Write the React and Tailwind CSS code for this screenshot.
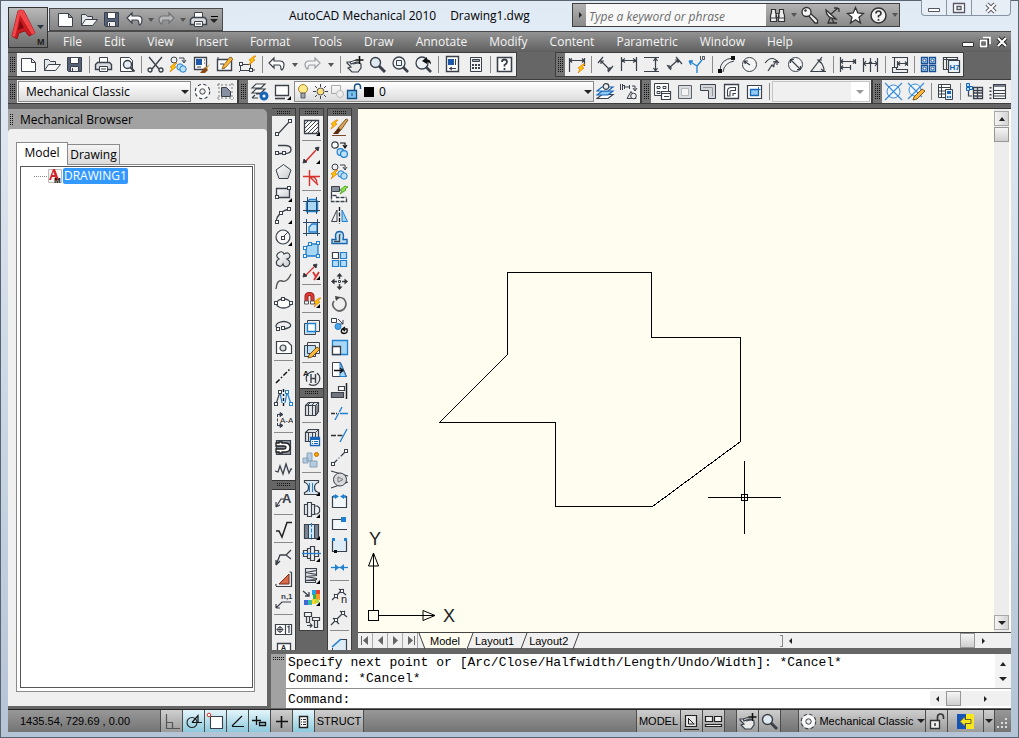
import React from 'react';

const K = '#3b414b';
const B = '#1f7fd0';
const L = '#bfe1f6';
const O = '#f5a800';
const R = '#d8322c';

function P({ d, f = 'none', s = K, w = 1, ...rest }) {
  return <path d={d} fill={f} stroke={s} strokeWidth={w} {...rest} />;
}

const corner = <path d="M18 14v4h-4z" fill="#000" />;
const bolt = (x, y) => <path d={`M${x + 5} ${y}l-5 4 2 1-2 4 6-5-2-1 3-3z`} fill="#ffc400" stroke="#e07b00" strokeWidth="0.7" />;
const dot = (x, y, c = K) => <rect x={x - 1.5} y={y - 1.5} width="3" height="3" fill="#fff" stroke={c} />;
const gearPath = (
  <>
    <circle cx="9.5" cy="9.5" r="6.5" fill="#fafafa" stroke={K} strokeWidth="2.6" strokeDasharray="2.9 2.2" />
    <circle cx="9.5" cy="9.5" r="6" fill="#fafafa" stroke="#fafafa" strokeWidth="1.4" />
    <circle cx="9.5" cy="9.5" r="2.7" fill="#eee" stroke={K} />
  </>
);

const ICONS = {
  new: <P d="M2.5 3.5h10l4 4v9h-14zM12.5 3.5v4h4" f="#fff" />,
  open: <><P d="M2.5 15.5v-11h4l2 2h5v3" f="#e4e7ea" /><P d="M2.5 15.5l4-6h12l-5 6z" f="#f6f6f6" /></>,
  save: <><P d="M2.5 2.5h14v14h-13l-1-1z" f="#56617a" /><P d="M5.5 2.5h8v6h-8z" f="#fff" /><P d="M5.5 11.5h8v5h-8zM7.5 13v3" f="#eee" /></>,
  print: <><P d="M5.5 2.5h8v5h-8z" f="#fff" /><P d="M3.5 7.5h12l2 2v5h-16v-5z" f="#d9dbde" w={1.4} /><P d="M5.5 11.5h8v5h-8zM7 14h5" f="#fff" /></>,
  preview: <><P d="M3.5 2.5h9l3 3v11h-12z" f="#fff" /><circle cx="10.5" cy="9.5" r="4" fill="#e6eef5" stroke={K} strokeWidth="1.4" /><P d="M13.5 12.5l4 4" w={2} /></>,
  cut: <><P d="M3 2l10 12M16 2L6 14" w={1.4} /><circle cx="4" cy="15" r="2" fill="none" stroke={K} strokeWidth="1.3" /><circle cx="15" cy="15" r="2" fill="none" stroke={K} strokeWidth="1.3" /></>,
  copyclip: <><circle cx="5" cy="5" r="3" fill="none" stroke={K} /><P d="M10 3h5v4M13 5l2 3 2-3" />{bolt(1, 8)}<circle cx="11" cy="12" r="3.2" fill={L} stroke={B} /><circle cx="14" cy="14" r="3.2" fill={L} stroke={B} /></>,
  matchprop: <><P d="M2.5 2.5h12v12h-12z" f="#fff" w={1.3} /><path d="M4 4h6v6H4z" fill="#1d58a8" /><P d="M12 5h1M12 8h1M5 12h4" /><path d="M18 9l-5 4 1 2z" fill="#d89b2c" /><path d="M13 12l3 3-3 3H8z" fill="#8b4a12" /></>,
  blockedit: <><P d="M2.5 4.5h14v11h-14z" f="#fff" w={1.4} /><P d="M5 9h4v5M3 2v3M16 2v3" /><path d="M8 11L15 2l3 2-7 8-4 2z" fill="#fdb73a" stroke="#7a4a00" strokeWidth="0.7" /></>,
  wipeout: <><P d="M2.5 9.5h10v6h-10zM13 15h4" /><P d="M3 15l-2 2M12 9l2-2" />{dot(3, 9)}{dot(13, 15)}{bolt(11, 1)}</>,
  undo: <P d="M7 3L2 8l5 5v-3h5q2 0 2 4 0 1 1 1 2-2 2-5 0-4-4-4H7z" f="#fff" w={1.2} />,
  redo: <P d="M12 3l5 5-5 5v-3H7q-2 0-2 4-2 0-3-4 0-4 4-4h6z" f="#f4f4f4" s="#9a9ea4" w={1.2} />,
  redodim: <P d="M12 3l5 5-5 5v-3H7q-2 0-2 4-2 0-3-4 0-4 4-4h6z" f="#b9b9b9" s="#6f7378" w={1.2} />,
  pan: <><P d="M2 7l3 0 1 2 6-2 4 2v4l-3 4H7L3 13l3-1-4-4z" f="#e9e9e9" w={1.2} /><P d="M5 7l6-2M8 9l5-1" /><P d="M14.5 1v8M10.5 5h8" s="#111" w={1.6} /></>,
  zoom: <><circle cx="7.500" cy="7.500" r="5" fill="#dfeaf0" stroke={K} strokeWidth="1.4" /><P d="M11 11l6 6" w={3} /></>,
  zoomwin: <><circle cx="8" cy="8" r="6" fill="#eef3f6" stroke={K} strokeWidth="1.3" /><P d="M5.500 5.500h5v5h-5z" /><P d="M12 12l5 5" w={2.600} /></>,
  zoomprev: <><circle cx="8" cy="8" r="6" fill="#eef3f6" stroke={K} strokeWidth="1.3" /><P d="M12 12l5 5" w={2.600} /><path d="M8 6l5-4v2.500q4 0 4 5-1-2.500-4-2.500V9z" fill="#111" /></>,
  props: <><P d="M3.500 1.500h12v15h-12z" f="#fff" w={1.400} /><path d="M5 4h6v6H5z" fill="#1d58a8" /><P d="M12.500 4v6M6 13.500h7M9 12l-2.500 1.500L9 15" /></>,
  calc: <><P d="M4.500 2.500h11v14h-11z" f="#f4f4f4" /><P d="M6.500 4.500h7v2h-7z" f="#9aa" /><path d="M6 9h2v2H6zM9 9h2v2H9zM12 9h2v2h-2zM6 12h2v2H6zM9 12h2v2H9zM12 12h2v2h-2z" fill={K} /></>,
  help: <><P d="M2.500 2.500h14v14h-14z" f="#fff" w={1.600} /><P d="M7 7q0-2.500 2.500-2.500T12 7q0 1.500-2.500 3v1.500M9.500 13v2" w={1.800} /></>,
  powerdim: <><P d="M2.500 3v14M17.500 3v8M3 5.500h14M5 3.500l-2 2 2 2M15 3.500l2 2-2 2" w={1.200} />{bolt(11, 9)}</>,
  aligned: <><P d="M5 6l9 9M2 8l5-6M12 17l5-6M5 9V6h3M14 12v3h-3" w={1.200} /></>,
  linear: <P d="M2.500 2v14M17.500 2v14M3 5.500h14M6 3.500l-3 2 3 2M14 3.500l3 2-3 2" w={1.200} />,
  vertical: <P d="M2 2.500h15M2 16.500h15M13.500 3v13M11.500 6l2-3 2 3M11.500 13l2 3 2-3" w={1.200} />,
  rotated: <P d="M4 13l9-8M2 10l4 5M11 2l6 7M4 10v3h3M10 5h3v3" w={1.200} />,
  leaderbl: <><P d="M1 6l8 5v7M9 11l5-6M1 6l2 4M1 6h4" s={B} w={1.300} /><P d="M12.500 1v4M14.500 1.500h2v3h-2z" w={0.900} /></>,
  arc: <><P d="M3 16Q3 4 16 3M6 17Q7 8 17 6" /><path d="M1 14h4v4H1zM14 1h4v4h-4z" fill="#111" /></>,
  radius: <><circle cx="9.500" cy="9.500" r="7" fill="#f5f5f5" stroke={K} /><P d="M4 6l6 4M4 6l1.500 3M4 6l4 0" w={1.200} /></>,
  jog: <P d="M2 8Q9-1 16 8M10 7l4-1v4M14 6q-4 3-3 6L9 10l-4 6" w={1.200} />,
  diameter: <><circle cx="9.500" cy="9.500" r="7" fill="#f5f5f5" stroke={K} /><P d="M4.500 4.500l10 10M4.500 8V4.500H8M14.500 11v3.500H11" w={1.200} /></>,
  angular: <P d="M17 16.500H2L13 2M9 5q6 4 6 11M12 8l-3-3 4 0M12 14l3 2.500" w={1.200} />,
  baseline: <P d="M2.500 2v15M3 6.500h14M17.500 4v5M3 12.500h9M12.500 10v5M5 4.500l-2 2 2 2M15 4.500l2 2-2 2M5 10.500l-2 2 2 2" w={1.200} />,
  continue: <P d="M2.500 3v14M9.500 3v14M16.500 3v14M3 8.500h13M5 6l-2 2.500L5 11M14 6l2 2.500-2 2.500M8 7l1.500 1.500L11 7" w={1.200} />,
  ordinate: <P d="M2.500 17.500v-5h4v2h11v3zM2 2.500h16M4.500 3v9M7.500 6v7M17.500 3v8M8 8.500h9M10 6.500l-2 2 2 2M15 6.500l2 2-2 2" w={1.100} />,
  fourcirc: <><P d="M2.500 2.500h6v6h-6zM10.500 2.500h6v6h-6zM2.500 10.500h6v6h-6zM10.500 10.500h6v6h-6z" f={L} s="#1a4f93" w={1.300} />{[5.5, 13.5].map(x => [5.5, 13.5].map(y => <circle key={`${x}-${y}`} cx={x} cy={y} r="1.500" fill="#fff" stroke="#1a4f93" />))}</>,
  h7: <><P d="M1.500 2.500h14v12h-14zM2 4.500h13M4.500 3v11" f="#fff" w={1.200} /><P d="M6.500 5.500h11v12h-11z" f="#eaf4fb" w={1.200} /><text x="7.500" y="15" fontSize="8" fontWeight="bold" fill="#1560b0" fontFamily="Liberation Sans, sans-serif">H7</text></>,
  gear: gearPath,
  wssave: <><P d="M3 1v17M16 1v17M1 3h17M1 16h17" s="#777" strokeDasharray="2 2" /><P d="M5.500 14.500v-9h5l4 4v5z" f="#8690a2" /></>,
  layers: <><P d="M6 2h9l-4 4H2zM6 7h9l-4 4H2zM6 12h6M2 16l3-3M2 16h6" f="#fff" w={1.200} /><circle cx="14" cy="14" r="3" fill="#fff" stroke="#1765b8" strokeWidth="3" /></>,
  layerbox: <><P d="M2.500 3.500h13v10h-13z" f="#fff" w={1.300} /><P d="M2 16.500h10" w={1.600} />{corner}</>,
  layerprev: <><P d="M6 12.500h11l-5 4H1z" f="#fff" s={K} w={1.200} /><P d="M6 9h11l-5 4H1z" f="#8fcbf4" s="#1765b8" w={1.200} /><P d="M6 5h11l-5 4H1z" f="#fff" s="#1765b8" w={1.200} /><circle cx="10" cy="4.500" r="2.800" fill="#eee" stroke={K} strokeWidth="1.200" /></>,
  layerstate: <><P d="M1.500 2v6M3.500 2v6M5.500 3v4M6 5h4M10.500 3v4M13 4h3v4M14 6l2 3 2-3M4 3.500h1" /><P d="M8 16.500l4-7 5 7z" f="#e8e8e8" /><circle cx="14.500" cy="14" r="2.800" fill="#eee" stroke={K} /></>,
  table: <><P d="M1.500 1.500h14v12h-14z" f="#fff" /><P d="M4 4.500h3v2H4zM10 4.500h3v2h-3zM4 9.500h3v2H4z" /><P d="M8.500 9.500h9v8h-9zM9 11.500h8M11 14.500h5" f="#fff" w={1.200} /></>,
  sq: <><P d="M2.500 3.500h13v13h-13z" f="#d9dbdd" s="#5b616b" /><P d="M5.500 6.500h7v7h-7z" f="#f4f4f4" s="#b5b8bb" /></>,
  lshape: <><P d="M1.500 2.500h15v14h-7v-8h-8z" f="#d2d5d9" /><P d="M4 5.500h9.500V14" s="#999" /></>,
  maze: <><P d="M2.500 2.500h14v14h-14z" f="#fff" w={1.300} /><P d="M5.500 14V9q0-3.500 4-3.500h4v3h-4q-1.500 0-1.500 1.500v4zM11 14v-2.500h3" w={1.100} /></>,
  blueview: <><P d="M2.500 3.500h14v13h-14z" f="#fff" w={1.200} /><P d="M5.500 7.500h8v6h-8z" f="#8fcbf4" s="#1765b8" w={1.300} /><P d="M13.500 5v3M11.500 7.500h4" s="#1765b8" /></>,
  xcirc: <><circle cx="9.500" cy="9.500" r="6.500" fill="#f1f8fd" stroke="#3d8cd6" /><P d="M1 1l17 17M18 1L1 18" s="#3d8cd6" w={1.200} /></>,
  xcircpen: <><circle cx="8" cy="8" r="6" fill="#f1f8fd" stroke="#3d8cd6" /><P d="M1 1l14 14M17 1L1 17" s="#3d8cd6" w={1.200} /><path d="M7 15l8-8 3 2-8 8-4 1z" fill="#fdb73a" stroke="#5a3a00" strokeWidth="0.800" /></>,
  sheetcalc: <><P d="M2.500 2.500h12v13h-12zM3 5.500h11M5.500 3v12M3 9h6M3 12h6" f="#fff" /><P d="M9.500 7.500h7v10h-7z" f="#e7f1f8" /><path d="M11 9h4v3h-4zM11 14h1.500v2H11zM13.500 14H15v2h-1.500z" fill="#1765b8" /></>,
  treetable: <><P d="M1.500 1.500h3v3h-3zM4.500 4.500h3v3h-3zM1.500 5.500h3v3h-3z" s="#1765b8" f={L} /><P d="M3.500 9v5H7" w={1.200} /><P d="M8.500 5.500h9v11h-9zM9 8.500h8M9 11h8M9 14h8M12.500 6v10" f="#fff" w={1.300} /></>,
  list: <><P d="M5.500 2.500h12v14h-12zM6 8.500h11M6 11.500h11M6 14h11" f="#f7f7f7" w={1.100} /><path d="M6 3h11v2H6z" fill="#777f8b" /><P d="M2.500 5v12" strokeDasharray="1.500 2" w={2} /></>,
  line: <><P d="M3 17L16 3" w={1.200} />{dot(3, 16)}{dot(16, 3)}</>,
  pline: <><P d="M3 13.500h7M4 5.500h7q6 0 6 4t-6 4" w={1.300} />{dot(3, 13)}{dot(10, 13)}</>,
  polygon: <P d="M9.500 2.500l7.500 5.500-3 8.500H5L2 8z" f="url(#silver)" />,
  rect: <><P d="M2.500 4.500h13v9h-13z" f="url(#silver)" w={1.300} />{dot(3, 13)}{dot(15, 4)}{corner}</>,
  arc2: <><P d="M2 16Q3 6 15 3" w={1.300} />{dot(3, 16)}{dot(7, 7)}{dot(15, 3)}{corner}</>,
  circle: <><circle cx="9" cy="9" r="7" fill="#f7f7f7" stroke={K} strokeWidth="1.200" /><P d="M9 9l5-5" />{dot(9, 10)}{corner}</>,
  cloud: <P d="M6 2q3-1 4 2 5-3 6 2 0 2-3 3 5 3 1 7-4 2-5-2-2 4-6 1-2-4 2-6Q0 5 6 2z" f="url(#silver)" w={1.200} />,
  spline: <P d="M2 17Q3 7 8 9T17 2" w={1.400} s="#555" />,
  ellipse: <><ellipse cx="9.500" cy="9.500" rx="7" ry="4.500" fill="#fff" stroke={K} strokeWidth="1.300" />{dot(2, 9)}{dot(17, 9)}{dot(9, 5)}</>,
  earc: <><P d="M4 13q-4-3 0-6 6-3 11 0 5 4-5 6" w={1.300} />{dot(9, 12)}{dot(4, 13)}</>,
  block: <><P d="M2.500 3.500h11l4 4v8h-15z" f="#fff" w={1.200} /><circle cx="9" cy="10" r="3" fill="#ddd" stroke={K} strokeWidth="1.200" /></>,
  dashdot: <P d="M2 17L17 2" s="#111" w={1.500} strokeDasharray="5 2 1.500 2" />,
  symline: <><P d="M2 16L6 4" s={K} w={1.200} /><P d="M6 4l2 11" s={B} w={1.200} /><P d="M9.500 1v3M9.500 6v2M9.500 10v3M9.500 15v3" s="#111" w={1.400} /><P d="M13 4l-2 11M13 4l4 12" s={B} w={1.200} />{dot(2, 16)}{dot(6, 4)}{dot(13, 4, B)}{dot(17, 16, B)}</>,
  section: <><P d="M3.500 4v12M3 4.500h5M3 15.500h5" strokeDasharray="3 1.500" /><P d="M6 2.500l3 2-3 2zM6 13.500l3 2-3 2z" f={K} /><text x="6" y="13" fontSize="8" fill="#222" fontFamily="Liberation Sans, sans-serif">A-A</text></>,
  hole: <><P d="M2.500 2.500h14v14h-14z" f="#8a929e" w={1.200} /><P d="M2 5h3v-1h3v1h3q5 0 5 4.500T11 14H8v1H5v-1H2v-3h8q2 0 2-1.500T10 8H2z" f="#fff" s="#222" w={1.300} /></>,
  zigzag: <P d="M1 11l3 1 2-6 3 8 3-10 3 9 2-4h1" w={1.300} />,
  textA: <><P d="M2 15l5-8h3M2 15v-5M2 15l4-2" w={1.200} /><text x="8" y="11" fontSize="13" fontWeight="bold" fill={K} fontFamily="Liberation Sans, sans-serif">A</text></>,
  surf: <P d="M2 11h3l3 6L13 2.500h5" s="#222" w={1.500} />,
  weld: <P d="M2 17l4-10h6l5-5M12 7l5 4M2 17v-5M2 17l4-4" w={1.300} />,
  taper: <><path d="M5 14L15 4v10z" fill="#d96b4b" stroke="#7b2e1a" /><P d="M17.500 2v14.500H2M15.500 2h2M2 14v2" w={1.200} /></>,
  n1: <><P d="M2 16l6-6h9M2 16v-4M2 16h4" w={1.200} /><text x="7" y="7" fontSize="8" fontWeight="bold" fill={K} fontFamily="Liberation Sans, sans-serif">n,1</text></>,
  gdt: <><P d="M1.500 4.500h16v10h-16zM11.500 5v9M13.500 7l1.500-1v7" f="#fff" w={1.200} /><circle cx="6" cy="9.500" r="2.500" fill="none" stroke={K} /><P d="M6 6v7M2.500 9.500h7" /></>,
  boxA: <><P d="M3.500 1.500h13v15h-13z" f="#fff" w={1.300} /><text x="7" y="8" fontSize="7" fontWeight="bold" fill="#222" fontFamily="Liberation Sans, sans-serif">A</text></>,
  hatch: <><P d="M2.500 2.500h14v13h-14z" f="#fff" w={1.300} /><P d="M3 6l3-3M3 10l7-7M3 14l11-11M6 15L16 5M10 15l6-6M14 15l2-2" />{corner}</>,
  redline: <><P d="M4 15L14 4" s={R} w={1.500} /><P d="M1 17l1-4 3 3zM17 1l-1 4-3-3z" f="#333" />{corner}</>,
  redcross: <P d="M1 8.500h17M7.500 2v16M8 9l8 8M8 9q7-1 7 7" s={R} w={1.400} />,
  hb1: <><P d="M4.500 15.500V7l3-3.500h6l2 2v10z" f="#a9d6f3" s={B} w={1.400} /><P d="M5.500 1v17M14.500 1v17M1 5.500h17M1 14.500h17" s="#27496b" /></>,
  hb2: <><P d="M7 14V9l3-3h5v8z" f={L} s={B} w={1.300} /><P d="M4.500 1v17M15.500 1v17M1 4.500h17M1 15.500h17" s="#27496b" /></>,
  hb3: <><P d="M4 16V7l4-3h8v12z" f="#a9d6f3" s={B} w={1.300} />{dot(3, 16, B)}{dot(16, 16, B)}{dot(16, 3, B)}{dot(8, 4, B)}{dot(3, 8, B)}</>,
  redscale: <><P d="M4 13l9-9" s={R} w={1.300} /><P d="M1 15l1-4 3 3zM15 2l-1 4-3-3z" f="#333" /><P d="M11 10l3 5M17 10l-5 8" s={R} w={1.800} />{corner}</>,
  magnet: <><P d="M4.500 12V6.500q0-2.500 3-2.500t3 2.500V12" s="#8e1714" w={4} /><P d="M4.500 12V6.500q0-2.500 3-2.500t3 2.500V12" s="#dc3a34" w={2.400} /><path d="M2.500 11h4v3h-4zM8.500 11h4v3h-4z" fill="#fff" stroke="#555" />{bolt(12, 8)}{corner}</>,
  copyview: <><P d="M2.500 5.500h11v11h-11z" f={L} s={K} /><P d="M5.500 2.500h12v11h-12z" f="none" s={K} /><P d="M5.500 5.500h8v8h-8z" f="#fff" s={B} w={1.300} /></>,
  editview: <><P d="M2.500 5.500h11v11h-11z" f={L} s={K} /><P d="M5.500 2.500h12v11h-12z" s={K} /><path d="M7 15l8-8 3 2-8 8-4 1z" fill="#fdb73a" stroke="#5a3a00" strokeWidth="0.800" /></>,
  ahrot: <><circle cx="11" cy="10.500" r="6.800" fill="none" stroke={K} strokeDasharray="15 3" strokeWidth="1.200" /><text x="1" y="8" fontSize="8" fontWeight="bold" fill="#222" fontFamily="Liberation Sans, sans-serif">A</text><P d="M9 6v9M13.500 6v9M9 10.500h5" w={1.400} /></>,
  cube: <><P d="M3.500 5.500l3-3h10v9l-3 4h-10z" f="#dfe3e7" w={1.200} /><P d="M3 5.500h10.500v10M13.500 5.500l3-3M6.500 6v9M10.500 6v9M6 5l3-3M10 5l3-3M15 5v9" /></>,
  cubelist: <><P d="M3.500 4.500l3-3h10v9l-3 3h-10z" f="#dfe3e7" w={1.200} /><P d="M3 4.500h10.500v9M13.500 4.500l3-3M6.500 5v8M10.500 5v8" /><P d="M8.500 9.500h9v8h-9z" f="#fff" s="#1765b8" w={1.300} /><path d="M9 10h8v2H9z" fill="#1765b8" /><P d="M10 13.500h1M12 13.500h4M10 15.500h1M12 15.500h4" s="#1765b8" /></>,
  parts: <><P d="M1 8h5v5H1zM8 11h7v6H8zM5 3h5v8H5z" f="#b4cce0" s="#8aa3b8" /><circle cx="14.500" cy="4.500" r="2" fill={O} stroke="#d26b00" /></>,
  beam: <><P d="M2.500 2.500h14v2q-4 1-4 5t4 5v2h-14v-2q4-1 4-5t-4-5z" f="#dce8f2" w={1.200} /><P d="M7.500 5v9M10.500 5v9" s={B} />{corner}</>,
  bolt1: <><P d="M2.500 4.500h3v10h-3zM5.500 2.500h4v14h-4zM9.500 4.500h3v10h-3zM12.500 6h3l2 2v4l-2 2h-3z" f="#eef1f4" w={1.200} />{corner}</>,
  shaft: <><P d="M2.500 2.500h4v14h-4zM12.500 2.500h4v14h-4z" f="#7b8796" w={1.200} /><P d="M6.500 2.500h6v14h-6z" f="#d4e9f7" /><P d="M9.500 1v17" s={B} strokeDasharray="4 1.500" />{corner}</>,
  shaft2: <><P d="M1.500 6.500h4v6h-4zM5.500 4.500h3v10h-3zM8.500 2.500h4v14h-4zM12.500 6.500h4v6h-4z" f="#eef1f4" w={1.200} /><P d="M0 9.500h19" s={B} w={1.300} />{corner}</>,
  spring: <><P d="M3.500 2.500h11v2l-11 2zM3.500 6.500l11 2v1l-11 1zM3.500 10.500l11 2v1l-11 1zM3.500 14.500h10v2h-10zM14.500 4.500v4M3.500 3v3" f="#dfe2e6" w={1.100} />{corner}</>,
  fea: <><path d="M10 2h4v5h-4z" fill="#23a0e8" /><path d="M14 2h4v5h-4z" fill="#e8402a" /><path d="M11 6h3v6h-3z" fill="#35b44a" /><path d="M14 6h4v6h-4z" fill="#f79a26" /><path d="M2 12h5v5H2z" fill="#3e68d8" /><path d="M6 12h4v5H6z" fill="#38bf9e" /><path d="M10 11h4v5h-4z" fill="#ffd42a" /><path d="M13 11h4v4h-4z" fill="#b6d838" /><P d="M1 3l6 5M7 4v4H3" w={1.300} />{corner}</>,
  screws: <><P d="M2.500 2.500h7v4h-7zM4.500 6.500h3v6h-3zM10.500 7.500h7v3h-7zM12.500 10.500h3v7h-3zM5 15.500h5M8 13.500l2 2-2 2" f="#f2f2f2" w={1.200} /></>,
  brush: <>{bolt(1, 2)}<path d="M18 2l-2-1-8 9 3 2z" fill="#d8a557" stroke="#6d3d0d" strokeWidth="0.800" /><path d="M8 10l3 2-3 4H3z" fill="#5b2b0b" /><P d="M2 17.500h14" s="#7b4a2a" /></>,
  copyobj: <><circle cx="5" cy="5" r="3.200" fill="#fff" stroke={K} strokeWidth="1.200" /><P d="M10 3h5v4M13 5l2 3 2-3" s="#111" w={1.200} /><circle cx="10.500" cy="12" r="3.400" fill={L} stroke={B} strokeWidth="1.200" /><circle cx="14" cy="14" r="3.400" fill={L} stroke={B} strokeWidth="1.200" /></>,
  offsetlist: <><P d="M1.500 2.500h8v5h-8z" f="#8a929e" /><P d="M1.500 7.500v4h5v2h10M1.500 11.500v6h15v-4" f="#fff" w={1.300} strokeDasharray="4 1" /><path d="M15 2l-5 4 2 1-2 3 6-4-1-1 3-2z" fill="#8fe04a" stroke="#3a9a14" strokeWidth="0.800" /></>,
  mirror: <><P d="M1.500 15.500L7 4v11.500z" f="#eee" /><P d="M9.500 1v17" s="#111" w={1.300} strokeDasharray="4 1.500" /><P d="M17.500 15.500L12 4v11.500z" f="#9fd2f5" s={B} /></>,
  offset: <><P d="M2 15.500h15v-4h-4q2-8-3.500-8T6 11.500H2z" f={L} s="#1a63ad" w={1.400} /><P d="M4 13.500h5.500V8q0-1.500 1-1.500" s={K} w={1.300} /></>,
  array: <><P d="M2.500 2.500h6v6h-6z" f="#fff" w={1.200} /><P d="M10.500 2.500h6v6h-6zM2.500 10.500h6v6h-6zM10.500 10.500h6v6h-6z" f="#b6dcf7" s={B} w={1.200} /></>,
  move: <><P d="M9.500 3v4M9.500 12v4M3 9.500h4M12 9.500h4" w={1.500} /><path d="M9.500 1l3 3.500h-6zM9.500 18l3-3.500h-6zM1 9.500l3.500 3v-6zM18 9.500l-3.500 3v-6z" fill="#333" /><P d="M8.500 8.500h2v2h-2z" f="#fff" /></>,
  rotate: <><P d="M6 5Q10 2 14 5q4 5 0 10-5 4-9 0-4-4-1-8" w={1.700} s="#666" /><path d="M5 2l5 1-4 4z" fill="#444" /></>,
  copyrot: <><P d="M1.500 2.500h5v4h-5z" f="#fff" /><P d="M8 3l5 5M13 4v4H9" /><circle cx="8" cy="10.500" r="3" fill="#49a3e8" stroke={B} /><P d="M12 13q-2 4 2 4.500 4 0 3-4.500h-4M15 11l-2.500 2 2.500 2" s="#111" w={1.400} /></>,
  scale: <><P d="M2.500 2.500h15v14h-15z" f="#a9d8f6" s={B} w={1.300} /><P d="M2.500 8.500h8v8h-8z" f="#fff" w={1.300} /></>,
  stretch: <><P d="M2.500 16.500v-14h8l6 14z" f="#fff" /><P d="M10 2.500l6 14h-6z" f="#a9d8f6" s={B} /><P d="M4 10.500h8M10 8l3 2.500-3 2.500" s="#111" w={1.400} /></>,
  align: <><P d="M1.500 10.500h12v5h-12z" f="#70757f" w={1.200} /><P d="M8.500 4.500h6v4h-6z" f="#fff" w={1.200} /><P d="M16.500 1v16" s="#222" w={1.500} /></>,
  trim: <><P d="M1 9.500h6" w={1.400} s="#333" strokeDasharray="4 1" /><P d="M5 16l7-13M10 9.500h8" s={B} w={1.300} strokeDasharray="8 1" /></>,
  extend: <><P d="M1 9.500h12" s="#333" w={1.400} strokeDasharray="5 1.500" /><P d="M10 16l7-13" s={B} w={1.300} /></>,
  breakpt: <><P d="M3 16L16 3" strokeDasharray="6 2 1 2" w={1.200} />{dot(3, 16)}{dot(16, 3)}</>,
  belt: <><P d="M1 1l17 5M1 18l17-6" w={1.100} /><circle cx="10" cy="9.500" r="6.500" fill="#d6d8da" stroke={K} /><P d="M8 7l5 2.500L8 12z" s="#777" /></>,
  grip1: <><P d="M2.500 4v11.500h14V4" f="#f2f8fc" w={1.200} /><P d="M3 4.500h3M13 4.500h3" s={B} w={2.500} /><path d="M5 2l4 2.500-4 2.500zM14 2l-4 2.500 4 2.500z" fill={B} /></>,
  grip2: <><P d="M16 5.500H2.500v10H17" f="#f2f8fc" w={1.200} /><path d="M11 3h5v5h-5z" fill={B} /></>,
  grip3: <><P d="M2.500 4v11.500h14V4" f="#dcecf8" w={1.200} /><path d="M2 2h3v3H2zM14 2h3v3h-3z" fill={B} /><path d="M4 14h3v3H4z" fill="#111" /></>,
  join: <><P d="M1 9.500h17" s={B} w={1.300} /><path d="M5 6l4 3.500L5 13zM14 6l-4 3.500L14 13z" fill={B} /></>,
  chamfn: <><P d="M2 14L13 3M4 8l4 5M9 3l7 6" w={1.200} />{dot(6, 10)}{dot(12, 5)}<text x="11" y="17" fontSize="11" fill="#222" fontFamily="Liberation Sans, sans-serif">n</text></>,
  chamf: <><P d="M1 17L15 3M3 10l6 6M10 3l7 6" w={1.200} />{dot(6, 12)}{dot(13, 5)}</>,
  fillet: <><path d="M3 17V10l8-7h6v15H3z" fill="#dcebf5" /><P d="M11 3.500h5.500V18" w={1.200} /><P d="M2 11l9-8" s={B} w={1.600} /><P d="M2.500 12v6" /></>,
  ortho: <P d="M4.500 2v14.500H18M4.500 10.500h6v6" s="#555" w={1.200} />,
  polar: <><circle cx="8" cy="10.500" r="5" fill="none" stroke="#222" strokeWidth="1.100" /><P d="M8 10.500l6-7v7H8M14 10.500h4" s="#111" w={1.200} /></>,
  osnap: <><P d="M4.500 4.500h12v12h-12z" f="#fff" w={1.100} /><circle cx="3" cy="3" r="1.800" fill="#fff" stroke={R} /></>,
  otrack: <P d="M4 14.500h12M4 14L14 4" s="#111" w={1.200} />,
  dyn: <P d="M6.500 4v9M2 8.500h9M9.500 10.500h6v3h-6z" s="#111" w={1.300} />,
  plus: <P d="M9.500 4v12M4 9.500h12" s="#111" w={1.600} />,
  quick: <><P d="M5.500 4.500h8v11h-8z" f="#fff" s="#222" w={1.400} /><P d="M7 7.500h1M9 7.500h3M7 10h1M9 10h3M7 12.500h1M9 12.500h3" s="#222" w={1.100} /></>,
  mspace: <><P d="M3.500 3.500h11v11h-11z" f="#e8e8e8" s="#222" w={1.200} /><P d="M6.500 6v6h6M7 7l5 5" s="#222" /><P d="M2 17.500h15" s="#222" /></>,
  views: <P d="M1.500 4.500h7v5h-7zM10.500 4.500h7v5h-7zM1.500 12.500h16v2h-16z" f="#eee" s="#222" w={1.200} />,
  lock: <><P d="M3.500 8.500h9v8h-9z" f="#eee" s="#333" w={1.300} /><P d="M10.500 8V5q0-3 3-3t3 3v2" s="#333" w={1.600} /><P d="M8 11v3" s="#333" w={1.500} /></>,
  unlock: <><P d="M2.500 8.500h9v8h-9z" f="#7cc5ee" s="#174f85" w={1.300} /><P d="M9.500 8V5q0-3 3-3t3 3v2" s="#174f85" w={1.400} /><P d="M7 11v3" s="#174f85" /></>,
  clean: <><path d="M1 2h9v15H1z" fill="#1454b8" /><path d="M10 2h8v15h-8z" fill="#f7e51d" /><path d="M4 9.500l5-5v3h6v4H9v3z" fill="#f7e51d" stroke="#444" strokeWidth="0.800" /></>,
  bulb: <><circle cx="9" cy="7" r="4.500" fill="#ffe98a" stroke="#a8842a" /><path d="M7 11h4v5H7z" fill="#a5a9ae" stroke={K} strokeWidth="0.800" /></>,
  sun: <><circle cx="9.500" cy="9.500" r="3.500" fill="#ffe27a" stroke="#555" /><P d="M9.500 2v3M9.500 14v3M2 9.500h3M14 9.500h3M4 4l2 2M13 13l2 2M15 4l-2 2M4 15l2-2" /></>,
  vpfreeze: <><P d="M3.500 3.500h9v8h-9z" s="#aaa" /><circle cx="12" cy="12" r="3.500" fill="#eee" stroke="#bbb" /></>,
  binoc: <><P d="M3.500 3.500h4v3l1 3v6h-6v-6l1-3zM11.500 3.500h4v3l1 3v6h-6v-6l1-3zM8 7.500h3v4H8z" f="#eee" s="#333" w={1.200} /><P d="M3 12h5M11 12h5" /></>,
  key: <><P d="M8 9l7 8h2.500v-3L10 7" f="#f4f4f4" s="#333" w={1.300} /><circle cx="6.500" cy="6" r="4.500" fill="#f4f4f4" stroke="#333" strokeWidth="1.300" /><circle cx="5.500" cy="4.500" r="1.200" fill="#333" /></>,
  dish: <><P d="M3 4q0 8 10 9z" f="#f4f4f4" s="#333" w={1.300} /><P d="M8 8l7-6M11 2l3 0 2 1v3M7 12l-2 5h9M9 13l2 4" s="#333" w={1.300} /></>,
  star: <P d="M9.500 1.500l2.300 5.500 5.700.5-4.500 3.700 1.500 5.800-5-3.200-5 3.200L6 11.200 1.500 7.500 7.200 7z" f="#fff" s="#333" w={1.300} />,
  qmark: <><circle cx="9.500" cy="9.500" r="7.500" fill="#f4f4f4" stroke="#333" strokeWidth="1.500" /><P d="M7 7.500q0-2.500 2.500-2.500T12 7.500q0 1.500-2.500 2.500v1.500M9.500 13v1.800" s="#333" w={1.700} /></>,
};

function Icon({ n }) {
  return <svg viewBox="0 0 19 19" className="block h-[19px] w-[19px] shrink-0" aria-hidden="true">{ICONS[n]}</svg>;
}

function Tri({ dir = 'down', light = false }) {
  const d = { down: 'M0 1h8L4 5z', up: 'M1 5h6L4 1z', left: 'M5 0v6L2 3z', right: 'M3 0v6l3-3z' }[dir];
  return <svg viewBox="0 0 8 6" className="block h-[6px] w-[8px] shrink-0" aria-hidden="true"><path d={d} fill={light ? '#999' : '#222'} /></svg>;
}

function SmallTri() {
  return <svg viewBox="0 0 6 4" className="block h-[4px] w-[6px] shrink-0" aria-hidden="true"><path d="M0 0h6L3 4z" fill="#555" /></svg>;
}

const DOTS = 'bg-[conic-gradient(at_1px_1px,transparent_75%,#151515_0)] bg-[length:2px_2px]';

function Grip() {
  return <div className="flex w-[9px] shrink-0 items-center justify-center self-stretch bg-[#747474]"><div className={`h-[15px] w-[6px] ${DOTS}`} /></div>;
}

function HGrip({ first }) {
  return (
    <div className={`flex shrink-0 items-center justify-center bg-[#666] ${first ? 'h-[7px]' : 'h-[10px] border-y border-[#333]'}`}>
      <div className={`h-[4px] w-[14px] ${DOTS}`} />
    </div>
  );
}

function Tools({ items }) {
  return items.map((n, i) => {
    if (n === '|') return <div key={i} className="mx-[2px] h-[17px] w-[2px] shrink-0 border-r border-[#8b8b8b]" />;
    if (n === 's') return <button key={i} aria-label="More" className="flex w-[9px] shrink-0 justify-center"><SmallTri /></button>;
    if (n === 'v' || n === 'w') return <button key={i} aria-label="More" className="flex w-[13px] shrink-0 justify-center"><SmallTri /></button>;
    return <button key={i} aria-label={n} className="flex h-[23px] w-[23px] shrink-0 items-center justify-center hover:bg-[#d5e7f5]"><Icon n={n} /></button>;
  });
}

function Bar({ children, className = '' }) {
  return <div role="toolbar" className={`flex h-[23px] items-center bg-[#efefef] shadow-[0_0_0_1px_#3d3d3d] ${className}`}><Grip />{children}</div>;
}

function Palette({ groups }) {
  return (
    <div role="toolbar" aria-orientation="vertical" className="w-[23px] shrink-0 bg-[#efefef] shadow-[0_0_0_1px_#3d3d3d]">
      {groups.map((g, gi) => (
        <div key={gi}>
          <HGrip first={gi === 0} />
          {g.map((n, i) => n === '|'
            ? <div key={i} className="mx-[2px] h-[6px] pt-[2px]"><div className="h-px bg-[#8b8b8b]" /></div>
            : <button key={i} aria-label={n} className="flex h-[22px] w-[23px] justify-center pt-[2px] hover:bg-[#d5e7f5]"><Icon n={n} /></button>)}
        </div>
      ))}
    </div>
  );
}

const COL1 = [
  ['line', 'pline', 'polygon', 'rect', 'arc2', 'circle', 'cloud', 'spline', 'ellipse', 'earc', 'block', '|', 'dashdot', 'symline', 'section', '|', 'hole', 'zigzag'],
  ['textA', '|', 'surf', '|', 'weld', 'taper', 'n1', '|', 'gdt', 'boxA'],
];
const COL2 = [
  ['hatch', '|', 'redline', 'redcross', '|', 'hb1', 'hb2', 'hb3', 'redscale', '|', 'magnet', '|', 'copyview', 'editview', '|', 'ahrot'],
  ['cube', '|', 'cubelist', 'parts', '|', 'beam', 'bolt1', 'shaft', 'shaft2', 'spring', 'fea', 'screws'],
];
const COL3 = [
  ['brush', 'copyobj', 'copyclip', 'offsetlist', 'mirror', 'offset', 'array', 'move', 'rotate', 'copyrot', 'scale', 'stretch', 'align', 'trim', 'extend', 'breakpt', 'belt', 'grip1', 'grip2', 'grip3', 'join', '|', 'chamfn', 'chamf', '|', 'fillet'],
];
const MENUS = ['File', 'Edit', 'View', 'Insert', 'Format', 'Tools', 'Draw', 'Annotate', 'Modify', 'Content', 'Parametric', 'Window', 'Help'];

function TitleBar() {
  return (
    <header className="flex h-[31px] shrink-0 items-start text-black">
      <div className="ml-[41px] mt-2 flex h-[23px] w-[174px] shrink-0 items-center border border-[#4b4b4b] bg-linear-to-b from-[#a9a9a9] to-[#858585] pl-1">
        <Tools items={['new', 'open', 'save', 'undo', 's', 'redodim', 's', 'print']} />
        <button aria-label="Customize" className="flex flex-col items-center gap-px"><span className="h-px w-[7px] bg-black" /><Tri /></button>
      </div>
      <h1 className="ml-[66px] flex-1 whitespace-pre pt-2 text-[12px] leading-4">AutoCAD Mechanical 2010<span className="ml-[14px]">Drawing1.dwg</span></h1>
      <div className="mt-[3px] flex h-6 w-[328px] shrink-0 items-center border border-[#3f3f3f] bg-linear-to-b from-[#b2b2b2] to-[#8a8a8a]">
        <button aria-label="Expand search" className="flex w-[13px] shrink-0 justify-center"><Tri dir="right" /></button>
        <input aria-label="Search" placeholder="Type a keyword or phrase" className="h-full w-[180px] shrink-0 bg-[#f8f8f8] px-[3px] pt-[3px] text-[12px] italic outline-none placeholder:text-[#6d6d6d]" />
        <Tools items={['binoc', 's', 'key', 'dish', 'star', 'qmark', 's']} />
      </div>
      <div className="ml-[21px] flex h-4 w-[90px] shrink-0 rounded-b-[4px] border border-t-0 border-[#8794a5] bg-[#e7eef6]">
        <button aria-label="Minimize" className="flex w-[25px] items-center justify-center border-r border-[#8794a5]"><svg viewBox="0 0 14 12" className="h-3 w-[14px]"><P d="M1.500 6.500h11v3h-11z" f="#fff" s="#556" /></svg></button>
        <button aria-label="Restore" className="flex w-[25px] items-center justify-center border-r border-[#8794a5]"><svg viewBox="0 0 14 12" className="h-3 w-[14px]"><P d="M1.500 1.500h11v9h-11zM5 4.500h4v3H5z" f="#fff" s="#556" w={1.300} /></svg></button>
        <button aria-label="Close" className="flex flex-1 items-center justify-center"><svg viewBox="0 0 14 12" className="h-3 w-[14px]"><P d="M3 2l8 8M11 2l-8 8" s="#556" w={4.200} /><P d="M3 2l8 8M11 2l-8 8" s="#fff" w={2.200} /></svg></button>
      </div>
    </header>
  );
}

function MenuBar() {
  return (
    <nav className="flex h-[21px] shrink-0 items-center border-t border-[#4a4a4a] bg-linear-to-b from-[#939393] to-[#606060] pl-[55px] text-[12px] text-[#f4f4f4]">
      <div className="flex flex-1 gap-[22px]">
        {MENUS.map(m => <button key={m} className="leading-4">{m}</button>)}
      </div>
      <div className="flex items-center gap-[5px] pr-[3px]">
        <button aria-label="Minimize drawing"><svg viewBox="0 0 12 12" className="block h-3 w-3"><P d="M.5 6.500h11v4H.5z" f="#fff" s="#333" /></svg></button>
        <button aria-label="Restore drawing"><svg viewBox="0 0 12 12" className="block h-3 w-3"><P d="M4 2h7v7M1.500 4.500h6v6h-6z" s="#222" w={3.200} /><P d="M4 1.500h7v7M1.500 4.500h6v6h-6z" s="#fff" w={1.800} /></svg></button>
        <button aria-label="Close drawing"><svg viewBox="0 0 12 12" className="block h-3 w-3"><P d="M2 2l8 8M10 2l-8 8" s="#222" w={4} /><P d="M2 2l8 8M10 2l-8 8" s="#fff" w={2.200} /></svg></button>
      </div>
    </nav>
  );
}

function AppButton() {
  return (
    <button aria-label="Application menu" className="absolute left-2 top-[7px] h-[41px] w-10 border border-[#333] bg-linear-to-b from-[#b9b9b9] to-[#6d6d6d]">
      <svg viewBox="0 0 38 39" className="h-full w-full">
        <path d="M3 28L9 3q3-2 6 0l11 22-6 3-4-5-6 2-2 6z" fill="#c91a20" stroke="#8e0e13" strokeWidth="0.800" />
        <path d="M9 3q3-2 6 0l11 22-3 1.500L11 7 6 29l-3-1z" fill="#f0474a" />
        <path d="M11 12l4 8-6 2z" fill="#7e0c12" />
        <path d="M28 17h7l-3.500 4z" fill="#2c3844" />
        <text x="28" y="37" fontSize="9" fontWeight="bold" fill="#1d1d1d" fontFamily="Liberation Sans, sans-serif">M</text>
      </svg>
    </button>
  );
}

function Browser() {
  return (
    <aside className="mb-[3px] mt-px flex w-[259px] shrink-0 flex-col overflow-hidden rounded-tr-[5px] bg-[#a2a2a2]">
      <div className="flex h-5 shrink-0 items-center gap-[6px] pl-[2px] pt-px">
        <div className={`h-[12px] w-[4px] ${DOTS}`} />
        <h2 className="text-[12px] leading-4">Mechanical Browser</h2>
      </div>
      <div className="flex min-h-0 flex-1 flex-col rounded-t-[4px] bg-[#f0f0f0] pb-[14px] pl-2 pr-3 pt-[13px] text-[12px]">
        <div role="tablist" className="relative z-10 -mb-px flex items-end">
          <button role="tab" aria-selected="true" className="h-[23px] w-[52px] border border-b-0 border-[#8b8b8b] bg-white pb-[2px]">Model</button>
          <button role="tab" aria-selected="false" className="mb-px h-[20px] w-[52px] border border-b-0 border-l-0 border-[#8b8b8b] bg-linear-to-b from-[#f4f4f4] to-[#dcdcdc]">Drawing</button>
        </div>
        <div role="tabpanel" className="flex min-h-0 flex-1 border border-[#8b8b8b] bg-white p-[3px] pr-px pt-px">
          <ul role="tree" className="flex-1 border border-[#555] pl-[13px] pt-px">
            <li role="treeitem" aria-selected="true" className="flex items-center">
              <span className="w-[13px] border-t border-dotted border-[#888]" />
              <svg viewBox="0 0 16 16" className="h-4 w-4"><path d="M1.500 1.500h13v13h-13z" fill="#f6f6f6" stroke="#bbb" /><path d="M2 12L6 1h2l4 11H9L8 9H5l-1 3z" fill="#d6252b" /><path d="M6 3.500L7.500 7h-2z" fill="#fff" /><text x="7" y="15" fontSize="8" fontWeight="bold" fill="#111" fontFamily="Liberation Sans, sans-serif">M</text></svg>
              <span className="rounded-[2px] bg-[#3399ff] px-px leading-4 text-white">DRAWING1</span>
            </li>
          </ul>
        </div>
      </div>
    </aside>
  );
}

function ScrollBtn({ dir, flat }) {
  return <button aria-label={`Scroll ${dir}`} className={`flex h-[15px] w-[15px] shrink-0 items-center justify-center ${flat ? '' : 'border border-[#a8a8a8] bg-linear-to-r from-[#f4f4f4] to-[#d4d4d4]'}`}><Tri dir={dir} /></button>;
}

function Thumb() {
  return <div className="h-[15px] w-[15px] shrink-0 border border-[#979797] bg-linear-to-b from-[#f6f6f6] to-[#cfcfcf]" />;
}

function NavButton({ label, d }) {
  return <button aria-label={label} className="flex w-[15px] items-center justify-center border-r border-[#aaa]"><svg viewBox="0 0 9 9" className="h-[9px] w-[9px]"><path d={d} fill="#666" /></svg></button>;
}

function Slash() {
  return <svg viewBox="0 0 8 16" className="h-4 w-2 shrink-0" aria-hidden="true"><P d="M1 16L7 0" s="#444" /></svg>;
}

function DrawingArea() {
  return (
    <section className="ml-[6px] flex min-w-0 flex-1 flex-col border-t border-[#333]">
      <div className="flex min-h-0 flex-1 bg-[#fffdf0]">
        <svg className="block h-full min-w-0 flex-1" role="img" aria-label="Model space" shapeRendering="crispEdges">
          <g stroke="#000" fill="none">
            <path d="M149.500 163.500h144v65h89v104l-88 65h-97v-84h-116l68-68z" />
            <path d="M350 388.500h73M386.500 352v73M383.500 385.500h6v6h-6z" />
            <path d="M10.500 501.500h10v10h-10zM15.500 501V444M21 506.500h56" />
            <path d="M15.500 444l-5 13h10zM77 506.500l-12-5v10z" shapeRendering="auto" />
          </g>
          <g fontFamily="Liberation Sans, sans-serif" fontSize="18" fill="#222">
            <text x="11" y="436">Y</text>
            <text x="85" y="513">X</text>
          </g>
        </svg>
        <div className="mr-[2px] flex w-[15px] shrink-0 flex-col justify-between bg-[#ededed] py-[2px]">
          <div className="flex flex-col gap-px"><ScrollBtn dir="up" /><Thumb /></div>
          <ScrollBtn dir="down" />
        </div>
      </div>
      <div className="mb-[2px] flex h-4 shrink-0 items-stretch border-t border-[#444] bg-[#f0f0f0] font-['Liberation_Sans',sans-serif] text-[11px]">
        <div className="flex">
          <NavButton label="First" d="M0 0h1v9H0zM7 0v9L2 4.500z" />
          <NavButton label="Previous" d="M7 0v9L2 4.500z" />
          <NavButton label="Next" d="M2 0v9l5-4.500z" />
          <NavButton label="Last" d="M8 0h1v9H8zM2 0v9l5-4.500z" />
        </div>
        <svg viewBox="0 0 8 16" className="h-4 w-2 shrink-0" aria-hidden="true"><path d="M1 0h7v16z" fill="#fffdf0" /><P d="M1 0l6 16" s="#444" /></svg>
        <button className="bg-[#fffdf0] pl-[4px] pr-[6px] leading-4">Model</button>
        <svg viewBox="0 0 8 16" className="h-4 w-2 shrink-0" aria-hidden="true"><path d="M0 0h7L1 16H0z" fill="#fffdf0" /><P d="M1 16L7 0" s="#444" /></svg>
        <button className="pl-px pr-[6px] leading-4">Layout1</button>
        <Slash />
        <button className="pl-px pr-[4px] leading-4">Layout2</button>
        <Slash />
        <div className="flex-1" />
        <div className="flex w-[231px] items-center">
          <div className="h-3 w-[3px] border border-l-0 border-[#888]" />
          <ScrollBtn dir="left" flat />
          <div className="flex-1" />
          <Thumb />
          <ScrollBtn dir="right" flat />
          <div className="w-[21px]" />
        </div>
      </div>
    </section>
  );
}

function CommandLine() {
  return (
    <section className="mb-px mt-[4px] flex h-[54px] shrink-0 bg-white font-['Liberation_Mono',monospace] text-[13px] leading-4">
      <div className="w-[15px] shrink-0 bg-[#a2a2a2] pt-[3px]"><div className={`mx-auto h-[4px] w-[12px] ${DOTS}`} /></div>
      <div className="flex min-w-0 flex-1 flex-col">
        <div className="flex h-[37px] border-b border-[#8d8d8d]">
          <div className="min-w-0 flex-1 overflow-hidden whitespace-pre pl-[2px] pt-px">
            <p>Specify next point or [Arc/Close/Halfwidth/Length/Undo/Width]: *Cancel*</p>
            <p>Command: *Cancel*</p>
          </div>
          <div className="flex w-4 flex-col justify-between bg-[#f3f3f3] py-[2px]"><ScrollBtn dir="up" flat /><ScrollBtn dir="down" flat /></div>
        </div>
        <label className="flex flex-1 items-center pl-[2px]"><span className="pt-[3px]">Command:</span>
          <input aria-label="Command" className="ml-2 min-w-0 flex-1 outline-none" />
          <span className="flex items-center bg-[#f0f0f0] pr-[19px]"><ScrollBtn dir="left" flat /><span className="w-px" /><Thumb /><span className="w-[16px]" /><ScrollBtn dir="right" flat /></span>
        </label>
      </div>
    </section>
  );
}

const TOGGLES = [['ortho', false], ['polar', true], ['osnap', true], ['otrack', true], ['dyn', true], ['plus', false], ['quick', true]];
const SBTN = 'flex shrink-0 items-center justify-center border-r border-[#4d4d4d] bg-linear-to-b from-[#cfcfcf] to-[#9b9b9b]';

function StatusBar() {
  return (
    <footer className="flex h-[23px] shrink-0 border-t border-[#222] bg-linear-to-b from-[#989898] to-[#747474] font-['Liberation_Sans',sans-serif] text-[11px]">
      <div className="flex w-[153px] shrink-0 items-center border-r border-[#4d4d4d] pl-3">1435.54, 729.69 , 0.00</div>
      {TOGGLES.map(([n, on]) => (
        <button key={n} aria-label={n} aria-pressed={on} className={`flex w-[22px] shrink-0 items-center justify-center border-r border-[#4d4d4d] bg-linear-to-b ${on ? 'from-[#e4f5fb] to-[#8cc9dc]' : 'from-[#cfcfcf] to-[#9b9b9b]'}`}><Icon n={n} /></button>
      ))}
      <button className={`${SBTN} w-[49px]`}>STRUCT</button>
      <div className="flex-1 border-r border-[#4d4d4d]" />
      <button className={`${SBTN} w-[44px]`}>MODEL</button>
      <button aria-label="Model space" className={`${SBTN} w-[22px]`}><Icon n="mspace" /></button>
      <button aria-label="Quick view" className={`${SBTN} w-[22px]`}><Icon n="views" /></button>
      <div className="w-[12px] border-r border-[#4d4d4d]" />
      <button aria-label="Pan" className={`${SBTN} w-[22px]`}><Icon n="pan" /></button>
      <button aria-label="Zoom" className={`${SBTN} w-[22px]`}><Icon n="zoom" /></button>
      <div className="w-[18px] border-r border-[#4d4d4d]" />
      <button className={`${SBTN} w-[127px] gap-px whitespace-nowrap`}><Icon n="gear" />Mechanical Classic<span className="ml-[2px]"><Tri /></span></button>
      <button aria-label="Lock" className={`${SBTN} w-[22px]`}><Icon n="lock" /></button>
      <button aria-label="Clean screen" className={`${SBTN} w-[36px]`}><Icon n="clean" /></button>
      <button aria-label="Tray menu" className={`${SBTN} w-[11px]`}><Tri /></button>
      <div className="flex w-4 items-end justify-end p-[2px]"><svg viewBox="0 0 12 12" className="h-3 w-3"><path d="M8 0h2v2H8zM4 4h2v2H4zM8 4h2v2H8zM0 8h2v2H0zM4 8h2v2H4zM8 8h2v2H8z" fill="#ddd" /></svg></div>
    </footer>
  );
}

export default function App() {
  return (
    <div className="relative flex h-screen flex-col overflow-hidden bg-linear-to-b from-[#dfeaf5] from-0% via-[#e3ecf5] via-5% to-[#b5c4d5] px-2 pb-[6px] font-['Open_Sans','Noto_Sans',sans-serif] shadow-[inset_0_0_0_1px_#5a6470]">
      <svg className="absolute h-0 w-0" aria-hidden="true"><defs><linearGradient id="silver" x1="0" y1="0" x2="1" y2="1"><stop offset="0" stopColor="#fff" /><stop offset="1" stopColor="#c9ccd0" /></linearGradient></defs></svg>
      <TitleBar />
      <MenuBar />
      <AppButton />
      <main className="flex min-h-0 flex-1 flex-col overflow-hidden bg-[#666]">
        <div className="flex shrink-0 gap-10 pt-px">
          <Bar><Tools items={['new', 'open', 'save', '|', 'print', 'preview', '|', 'cut', 'copyclip', 'matchprop', 'blockedit', 'wipeout', '|', 'undo', 'v', 'redo', 'w', '|', 'pan', 'zoom', 'zoomwin', 'zoomprev', '|', 'props', 'calc', '|', 'help']} /></Bar>
          <Bar><Tools items={['powerdim', '|', 'aligned', 'linear', 'vertical', 'rotated', 'leaderbl', '|', 'arc', 'radius', 'jog', 'diameter', 'angular', '|', 'baseline', 'continue', '|', 'ordinate', '|', 'fourcirc', 'h7']} /></Bar>
        </div>
        <div className="mb-[5px] mt-[4px] flex shrink-0 gap-[2px]">
          <Bar>
            <div className="relative ml-px">
              <select aria-label="Workspace" className="block h-[21px] w-[173px] appearance-none border border-[#8a8a8a] bg-linear-to-b from-[#fff] to-[#dcdcdc] pl-[7px] text-[12px] outline-none"><option>Mechanical Classic</option></select>
              <span className="pointer-events-none absolute right-[2px] top-[8px]"><Tri /></span>
            </div>
            <Tools items={['gear', 'wssave']} />
          </Bar>
          <Bar>
            <Tools items={['layers', 'layerbox']} />
            <div className="relative">
              <select aria-label="Layer" className="block h-[21px] w-[300px] appearance-none border border-[#8a8a8a] bg-linear-to-b from-[#fff] to-[#dcdcdc] pl-[84px] text-[12px] outline-none"><option>0</option></select>
              <span className="pointer-events-none absolute left-px top-px flex items-center">
                {['bulb', 'sun', 'vpfreeze', 'unlock'].map(n => <span key={n} className="flex w-[17px] justify-center"><Icon n={n} /></span>)}
                <span className="ml-px h-[10px] w-[10px] bg-black" />
              </span>
              <span className="pointer-events-none absolute right-[2px] top-[8px]"><Tri /></span>
            </div>
            <Tools items={['layerprev', 'layerstate']} />
          </Bar>
          <Bar className="pr-px">
            <Tools items={['table', 'sq', 'lshape', 'maze', 'blueview', '|']} />
            <div className="relative">
              <select aria-label="View scale" disabled className="block h-[21px] w-[98px] appearance-none border border-[#c4c4c4] bg-[#f0f0f0]" />
              <span className="pointer-events-none absolute right-px top-px flex h-[19px] w-[18px] items-center justify-center bg-white"><Tri light /></span>
            </div>
          </Bar>
          <Bar className="flex-1 overflow-hidden"><Tools items={['xcirc', 'xcircpen', '|', 'sheetcalc', '|', 'treetable', 'list']} /></Bar>
        </div>
        <div className="flex min-h-0 flex-1">
          <Browser />
          <div className="ml-[4px] flex min-w-0 flex-1 flex-col">
            <div className="flex min-h-0 flex-1 overflow-hidden pl-px">
              <div className="flex min-h-0 items-start gap-[5px] overflow-hidden pr-px pt-px">
                <Palette groups={COL1} /><Palette groups={COL2} /><Palette groups={COL3} />
              </div>
              <DrawingArea />
            </div>
            <CommandLine />
          </div>
        </div>
      </main>
      <StatusBar />
    </div>
  );
}
